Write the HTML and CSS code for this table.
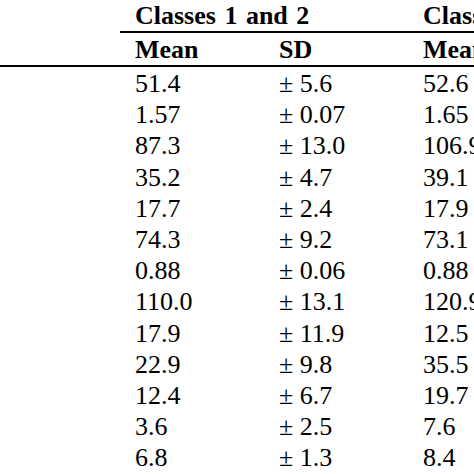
FILE: index.html
```html
<!DOCTYPE html>
<html>
<head>
<meta charset="utf-8">
<link rel="stylesheet" href="styles.css">
</head>
<body>
<div class="frame">
<table class="stats">
  <colgroup>
    <col class="c-label">
    <col class="c-val">
    <col class="c-val">
    <col class="c-val">
    <col class="c-val">
  </colgroup>
  <thead>
    <tr class="group">
      <th class="blank"></th>
      <th colspan="2" class="grp">Classes 1 and 2</th>
      <th colspan="2" class="grp">Classes 3 and 4</th>
    </tr>
    <tr class="sub">
      <th class="blank"></th>
      <th>Mean</th>
      <th>SD</th>
      <th>Mean</th>
      <th>SD</th>
    </tr>
  </thead>
  <tbody>
    <tr><td></td><td>51.4</td><td>± 5.6</td><td>52.6</td><td></td></tr>
    <tr><td></td><td>1.57</td><td>± 0.07</td><td>1.65</td><td></td></tr>
    <tr><td></td><td>87.3</td><td>± 13.0</td><td>106.9</td><td></td></tr>
    <tr><td></td><td>35.2</td><td>± 4.7</td><td>39.1</td><td></td></tr>
    <tr><td></td><td>17.7</td><td>± 2.4</td><td>17.9</td><td></td></tr>
    <tr><td></td><td>74.3</td><td>± 9.2</td><td>73.1</td><td></td></tr>
    <tr><td></td><td>0.88</td><td>± 0.06</td><td>0.88</td><td></td></tr>
    <tr><td></td><td>110.0</td><td>± 13.1</td><td>120.9</td><td></td></tr>
    <tr><td></td><td>17.9</td><td>± 11.9</td><td>12.5</td><td></td></tr>
    <tr><td></td><td>22.9</td><td>± 9.8</td><td>35.5</td><td></td></tr>
    <tr><td></td><td>12.4</td><td>± 6.7</td><td>19.7</td><td></td></tr>
    <tr><td></td><td>3.6</td><td>± 2.5</td><td>7.6</td><td></td></tr>
    <tr><td></td><td>6.8</td><td>± 1.3</td><td>8.4</td><td></td></tr>
  </tbody>
</table>
</div>
</body>
</html>
```
FILE: styles.css
```css
html, body {
  margin: 0;
  padding: 0;
  background: #ffffff;
}
body {
  width: 474px;
  height: 474px;
  overflow: hidden;
}
.frame {
  width: 474px;
  height: 474px;
  overflow: hidden;
}
.stats {
  border-collapse: collapse;
  table-layout: fixed;
  width: 696px;
  font-family: "Liberation Serif", "Times New Roman", serif;
  font-size: 26px;
  color: #000000;
}
.c-label { width: 120px; }
.c-val { width: 144px; }
.stats th, .stats td {
  padding: 0 0 0 15px;
  text-align: left;
  white-space: nowrap;
  overflow: hidden;
}
.stats th.blank, .stats td:first-child {
  padding: 0;
}
.group th {
  font-weight: bold;
  line-height: 30px;
  padding-top: 1px;
  word-spacing: 2px;
}
.group th.grp {
  border-bottom: 2px solid #000000;
}
.sub th {
  font-weight: bold;
  line-height: 30px;
  padding-top: 2px;
  border-bottom: 2px solid #000000;
}
.stats td {
  line-height: 31.2px;
}
.stats tbody tr:first-child td {
  padding-top: 1px;
}
```
